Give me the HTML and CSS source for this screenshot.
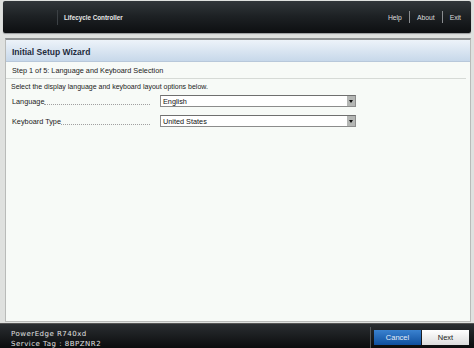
FILE: index.html
```html
<!DOCTYPE html>
<html>
<head>
<meta charset="utf-8">
<link rel="stylesheet" href="styles.css">
</head>
<body>
<div class="page">
  <header class="topbar">
    <div class="brand">
      <span class="brand-sep"></span>
      <span class="brand-name">Lifecycle Controller</span>
    </div>
    <nav class="links">
      <span class="link">Help</span>
      <span class="link-sep"></span>
      <span class="link">About</span>
      <span class="link-sep"></span>
      <span class="link">Exit</span>
    </nav>
  </header>
  <main class="panel">
    <div class="panel-head">Initial Setup Wizard</div>
    <div class="step">Step 1 of 5: Language and Keyboard Selection</div>
    <div class="rule"></div>
    <div class="intro">Select the display language and keyboard layout options below.</div>
    <div class="form">
      <div class="label-cell"><span class="label">Language</span><span class="leader"></span></div>
      <div class="select"><span class="value">English</span><span class="arrow"></span></div>
      <div class="label-cell"><span class="label">Keyboard Type</span><span class="leader"></span></div>
      <div class="select"><span class="value">United States</span><span class="arrow"></span></div>
    </div>
  </main>
  <footer class="footer">
    <div class="sysinfo">
      <div>PowerEdge R740xd</div>
      <div>Service Tag : 8BPZNR2</div>
    </div>
    <div class="buttons">
      <span class="btn-sep"></span>
      <button class="btn btn-cancel">Cancel</button>
      <button class="btn btn-next">Next</button>
    </div>
  </footer>
</div>
</body>
</html>
```
FILE: styles.css
```css
html, body {
  margin: 0;
  padding: 0;
}
body {
  width: 474px;
  height: 348px;
  overflow: hidden;
  font-family: "Liberation Sans", Arial, sans-serif;
  background: #dfe1df;
}
.page {
  display: flex;
  flex-direction: column;
  height: 348px;
}
.topbar {
  margin: 1px 3px 0 3px;
  height: 32px;
  background: linear-gradient(#32373b 0%, #1e2225 45%, #0d0f11 100%);
  border-radius: 2px;
  display: flex;
  align-items: center;
  justify-content: space-between;
  box-shadow: 0 1px 1px #9a9c9e;
}
.brand {
  display: flex;
  align-items: center;
  padding-left: 54px;
}
.brand-sep {
  width: 1px;
  height: 15px;
  background: #3c4145;
  margin-right: 6px;
}
.brand-name {
  color: #e8e8e8;
  font-size: 6.3px;
  font-weight: bold;
  font-family: "Liberation Sans", Arial, sans-serif;
}
.links {
  display: flex;
  align-items: center;
  padding-right: 10px;
}
.link {
  color: #dadcdd;
  font-size: 6.8px;
}
.link-sep {
  width: 1px;
  height: 12px;
  background: #8a8d90;
  margin: 0 7px;
}
.panel {
  flex: 1;
  margin: 5px 3px 0 5px;
  background: #f7faf7;
  border: 1px solid #b9bbb9;
  border-top: 2px solid #8f9293;
  display: flex;
  flex-direction: column;
}
.panel-head {
  height: 17px;
  padding-top: 4px;
  line-height: 17px;
  padding-left: 6px;
  background: linear-gradient(#edf3f9, #c7d8ea);
  color: #1d2b3c;
  font-weight: bold;
  font-size: 8.5px;
  border-bottom: 1px solid #b8c8da;
}
.step {
  padding: 4px 6px 0;
  font-size: 7.3px;
  line-height: 9px;
  color: #222;
  height: 9px;
}
.rule {
  height: 1px;
  background: #d6dad6;
  margin: 3px 4px 0 0;
}
.intro {
  padding: 4px 5px 0;
  font-size: 7px;
  line-height: 8px;
  color: #222;
  height: 8px;
}
.form {
  display: grid;
  grid-template-columns: 138px 196px;
  column-gap: 10px;
  row-gap: 8px;
  padding-left: 6px;
  margin-top: 4px;
}
.label-cell {
  display: flex;
  align-items: center;
  height: 12px;
}
.label {
  font-size: 7.3px;
  color: #222;
}
.leader {
  flex: 1;
  align-self: flex-end;
  margin-bottom: 2px;
  border-bottom: 1px dotted #a0a0a0;
}
.select {
  height: 10px;
  border: 1px solid #8c8c8c;
  border-top-color: #6f6f6f;
  background: #fff;
  display: flex;
  align-items: center;
  justify-content: space-between;
}
.value {
  font-size: 7.3px;
  color: #111;
  padding-left: 2px;
}
.arrow {
  width: 8px;
  height: 10px;
  background: #b5b7b5;
  position: relative;
}
.arrow::after {
  content: "";
  position: absolute;
  left: 2px;
  top: 3.5px;
  border-left: 2px solid transparent;
  border-right: 2px solid transparent;
  border-top: 3px solid #111;
}
.footer {
  height: 24px;
  margin-top: 1px;
  background: linear-gradient(#2a2e31, #0b0c0d);
  border-top: 1px solid #555;
  display: flex;
  justify-content: space-between;
  align-items: stretch;
}
.sysinfo {
  padding: 5px 0 0 11px;
  color: #e0e0e0;
  font-family: "DejaVu Sans", sans-serif;
  font-size: 7px;
  letter-spacing: 0.5px;
  line-height: 10px;
}
.buttons {
  display: flex;
  align-items: center;
  padding-right: 5px;
}
.btn-sep {
  width: 1px;
  align-self: stretch;
  margin-top: 3px;
  background: #55595c;
  margin-right: 3px;
}
.btn {
  width: 47px;
  height: 15px;
  margin: 3px 0 0 0;
  border: 0;
  padding: 0;
  font-family: "Liberation Sans", Arial, sans-serif;
  font-size: 7.5px;
}
.btn-cancel {
  background: linear-gradient(#3a82d0, #0f4f9e);
  color: #e6eef8;
  margin-right: 1px;
}
.btn-next {
  background: linear-gradient(#ffffff, #dcdcdc);
  color: #222;
}
```
